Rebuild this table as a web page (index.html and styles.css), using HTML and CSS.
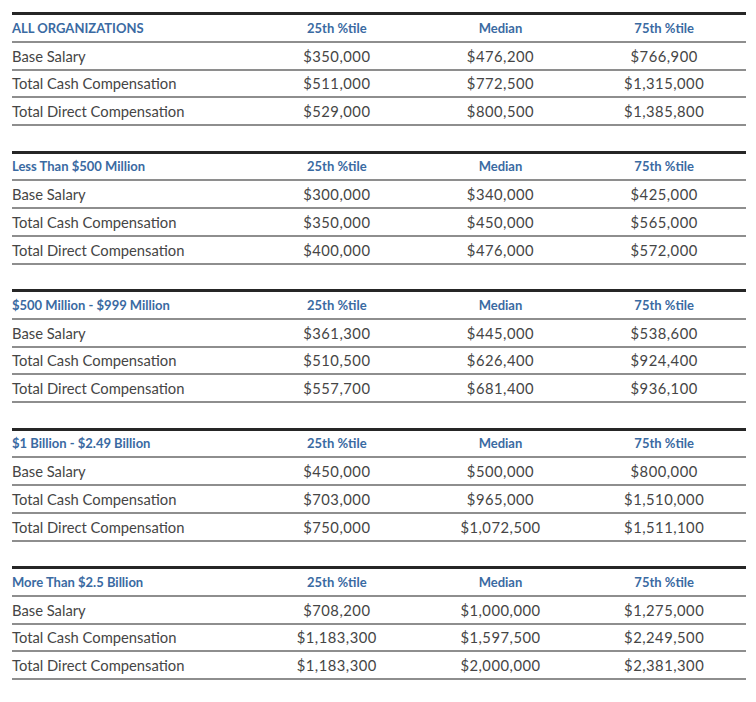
FILE: index.html
```html
<!DOCTYPE html>
<html lang="en">
<head>
<meta charset="utf-8">
<title>Compensation by Organization Size</title>
<link rel="stylesheet" href="styles.css">
</head>
<body>
<main class="page">
  <table class="comp">
    <colgroup><col class="c-label"><col class="c-num"><col class="c-num"><col class="c-num"></colgroup>
    <thead><tr><th class="lbl">ALL ORGANIZATIONS</th><th>25th %tile</th><th>Median</th><th>75th %tile</th></tr></thead>
    <tbody>
      <tr><td class="lbl">Base Salary</td><td>$350,000</td><td>$476,200</td><td>$766,900</td></tr>
      <tr><td class="lbl">Total Cash Compensation</td><td>$511,000</td><td>$772,500</td><td>$1,315,000</td></tr>
      <tr><td class="lbl">Total Direct Compensation</td><td>$529,000</td><td>$800,500</td><td>$1,385,800</td></tr>
    </tbody>
  </table>
  <table class="comp">
    <colgroup><col class="c-label"><col class="c-num"><col class="c-num"><col class="c-num"></colgroup>
    <thead><tr><th class="lbl">Less Than $500 Million</th><th>25th %tile</th><th>Median</th><th>75th %tile</th></tr></thead>
    <tbody>
      <tr><td class="lbl">Base Salary</td><td>$300,000</td><td>$340,000</td><td>$425,000</td></tr>
      <tr><td class="lbl">Total Cash Compensation</td><td>$350,000</td><td>$450,000</td><td>$565,000</td></tr>
      <tr><td class="lbl">Total Direct Compensation</td><td>$400,000</td><td>$476,000</td><td>$572,000</td></tr>
    </tbody>
  </table>
  <table class="comp">
    <colgroup><col class="c-label"><col class="c-num"><col class="c-num"><col class="c-num"></colgroup>
    <thead><tr><th class="lbl">$500 Million - $999 Million</th><th>25th %tile</th><th>Median</th><th>75th %tile</th></tr></thead>
    <tbody>
      <tr><td class="lbl">Base Salary</td><td>$361,300</td><td>$445,000</td><td>$538,600</td></tr>
      <tr><td class="lbl">Total Cash Compensation</td><td>$510,500</td><td>$626,400</td><td>$924,400</td></tr>
      <tr><td class="lbl">Total Direct Compensation</td><td>$557,700</td><td>$681,400</td><td>$936,100</td></tr>
    </tbody>
  </table>
  <table class="comp">
    <colgroup><col class="c-label"><col class="c-num"><col class="c-num"><col class="c-num"></colgroup>
    <thead><tr><th class="lbl">$1 Billion - $2.49 Billion</th><th>25th %tile</th><th>Median</th><th>75th %tile</th></tr></thead>
    <tbody>
      <tr><td class="lbl">Base Salary</td><td>$450,000</td><td>$500,000</td><td>$800,000</td></tr>
      <tr><td class="lbl">Total Cash Compensation</td><td>$703,000</td><td>$965,000</td><td>$1,510,000</td></tr>
      <tr><td class="lbl">Total Direct Compensation</td><td>$750,000</td><td>$1,072,500</td><td>$1,511,100</td></tr>
    </tbody>
  </table>
  <table class="comp">
    <colgroup><col class="c-label"><col class="c-num"><col class="c-num"><col class="c-num"></colgroup>
    <thead><tr><th class="lbl">More Than $2.5 Billion</th><th>25th %tile</th><th>Median</th><th>75th %tile</th></tr></thead>
    <tbody>
      <tr><td class="lbl">Base Salary</td><td>$708,200</td><td>$1,000,000</td><td>$1,275,000</td></tr>
      <tr><td class="lbl">Total Cash Compensation</td><td>$1,183,300</td><td>$1,597,500</td><td>$2,249,500</td></tr>
      <tr><td class="lbl">Total Direct Compensation</td><td>$1,183,300</td><td>$2,000,000</td><td>$2,381,300</td></tr>
    </tbody>
  </table>
</main>
</body>
</html>
```
FILE: styles.css
```css
html, body {
  margin: 0;
  padding: 0;
  background: #ffffff;
}
.page {
  padding: 12px 10px 0 12px;
  display: flex;
  flex-direction: column;
  gap: 24.5px;
}
.comp {
  width: 734px;
  border-collapse: collapse;
  table-layout: fixed;
  font-family: Lato, "Liberation Sans", sans-serif;
  color: #454545;
  border-top: 3px solid #262626;
}
.c-label { width: 243px; }
.c-num { width: 163.67px; }
.comp th, .comp td {
  height: 25.75px;
  padding: 0;
  border-bottom: 2px solid #8e8e8e;
  text-align: center;
  vertical-align: middle;
  white-space: nowrap;
}
.comp th {
  font-size: 13px;
  font-weight: 700;
  color: #3a6aa2;
}
.comp td {
  font-size: 14.75px;
  font-weight: 400;
  letter-spacing: 0.5px;
}
.comp .lbl {
  text-align: left;
  letter-spacing: 0;
}
```
